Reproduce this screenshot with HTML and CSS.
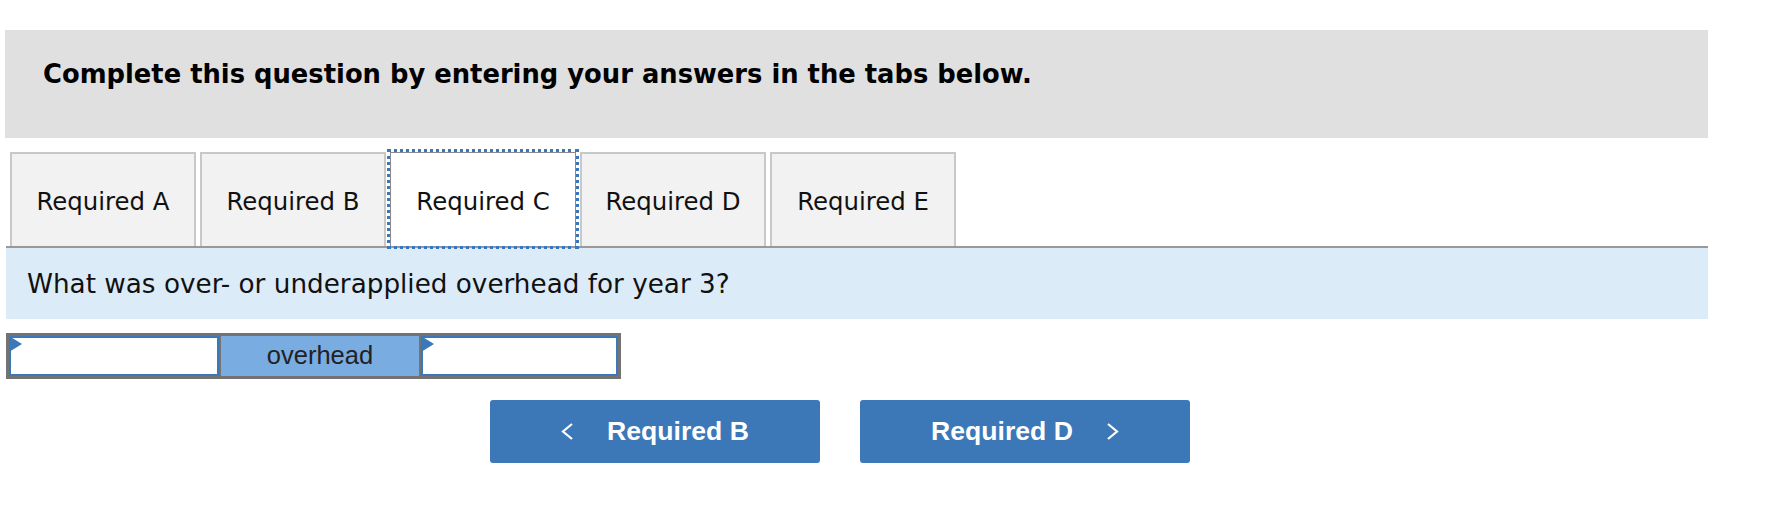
FILE: index.html
```html
<!DOCTYPE html>
<html>
<head>
<meta charset="utf-8">
<link rel="stylesheet" href="styles.css">
</head>
<body>
<div class="page">
  <div class="instructions">
    <p>Complete this question by entering your answers in the tabs below.</p>
  </div>
  <div class="tabset">
    <div class="tabs">
      <div class="tab">Required A</div>
      <div class="tab">Required B</div>
      <div class="tab active">Required C</div>
      <div class="tab">Required D</div>
      <div class="tab">Required E</div>
    </div>
    <div class="question">What was over- or underapplied overhead for year 3?</div>
  </div>
  <div class="answer-row">
    <div class="cell input first"><span class="marker"></span></div>
    <div class="cell label">overhead</div>
    <div class="cell input last"><span class="marker"></span></div>
  </div>
  <div class="nav">
    <button class="nav-btn">
      <svg class="chev" width="12" height="17" viewBox="0 0 12 17"><path d="M11 1 L2 8.5 L11 16" fill="none" stroke="#fff" stroke-width="2.2"/></svg>
      <span>Required B</span>
    </button>
    <button class="nav-btn">
      <span>Required D</span>
      <svg class="chev" width="12" height="17" viewBox="0 0 12 17"><path d="M1 1 L10 8.5 L1 16" fill="none" stroke="#fff" stroke-width="2.2"/></svg>
    </button>
  </div>
</div>
</body>
</html>
```
FILE: styles.css
```css
body {
  margin: 0;
  background: #fff;
}

.page {
  padding-top: 30px;
}

.instructions {
  margin-left: 5px;
  width: 1703px;
  height: 108px;
  box-sizing: border-box;
  background: #e0e0e0;
  padding: 29px 0 0 38px;
}

.instructions p {
  margin: 0;
  font: bold 25.8px/30px "DejaVu Sans", Verdana, sans-serif;
  color: #000;
}

.tabset {
  margin: 14px 0 0 6px;
  width: 1702px;
}

.tabs {
  display: flex;
  gap: 4px;
  padding-left: 4px;
  height: 94px;
  border-bottom: 2px solid #999;
}

.tab {
  width: 186px;
  box-sizing: border-box;
  border: 2px solid #c8c8c8;
  border-bottom: none;
  background: #f2f2f2;
  display: flex;
  align-items: center;
  justify-content: center;
  padding-top: 2px;
  font: 24.4px "DejaVu Sans", Verdana, sans-serif;
  color: #111;
}

.tab.active {
  background: #fff;
  border: 1px solid #8a8a8a;
  border-bottom: none;
  padding-top: 4px;
  outline: 3px dotted #3a76bd;
}

.question {
  background: #dcebf8;
  padding: 21px 21px 20px;
  font: 26.25px/30px "DejaVu Sans", Verdana, sans-serif;
  color: #111;
}

.answer-row {
  display: flex;
  gap: 2px;
  margin: 14px 0 0 6px;
  width: 615px;
  height: 46px;
  box-sizing: border-box;
  border: 3px solid #737373;
  background: #737373;
}

.cell {
  box-sizing: border-box;
  height: 40px;
}

.cell.input {
  position: relative;
  background: #fff;
  border: 2px solid #3b78b9;
}

.cell.first {
  width: 210px;
}

.cell.last {
  flex: 1;
}

.marker {
  position: absolute;
  left: -2px;
  top: -2px;
  width: 0;
  height: 0;
  border-top: 8px solid transparent;
  border-bottom: 8px solid transparent;
  border-left: 13px solid #3b78b9;
}

.cell.label {
  width: 198px;
  background: #79ace0;
  display: flex;
  align-items: center;
  justify-content: center;
  padding-bottom: 2px;
  font: 25.5px "Liberation Sans", Arial, sans-serif;
  color: #222;
}

.nav {
  display: flex;
  gap: 40px;
  margin: 21px 0 0 490px;
}

.nav-btn {
  width: 330px;
  height: 63px;
  border: 0;
  border-radius: 3px;
  padding: 0;
  background: #3c78b8;
  color: #fff;
  font: bold 26.6px "Liberation Sans", Arial, sans-serif;
  display: flex;
  align-items: center;
  justify-content: center;
  gap: 34px;
}

.chev {
  display: block;
}
```
